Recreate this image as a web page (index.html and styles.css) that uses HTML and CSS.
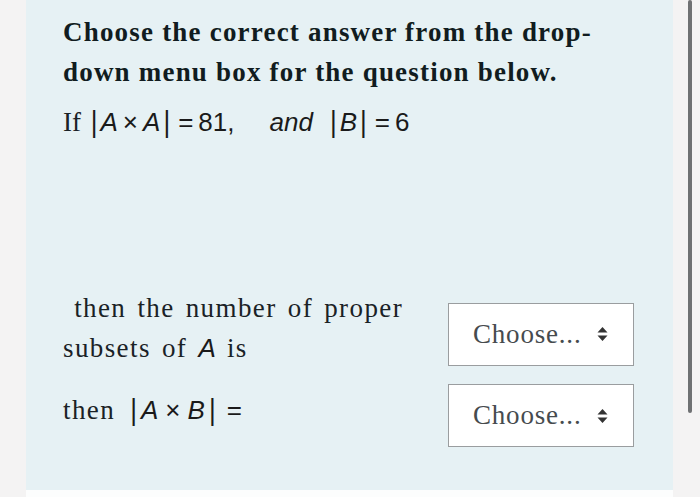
FILE: index.html
```html
<!DOCTYPE html>
<html lang="en">
<head>
<meta charset="utf-8">
<title>Question</title>
<link rel="stylesheet" href="styles.css">
</head>
<body>
<div class="page">
  <div class="main">
    <div class="panel">
      <p class="heading">Choose the correct answer from the drop-down menu box for the question below.</p>
      <p class="given">If <span class="math"><span class="bar">|</span><i>A</i><span class="op">×</span><i>A</i><span class="bar">|</span><span class="op">=</span>81,</span><span class="math and"><i>and</i></span><span class="math"><span class="bar">|</span><i>B</i><span class="bar">|</span><span class="op">=</span>6</span></p>
      <div class="rows">
        <div class="row">
          <div class="label">&nbsp;then the number of proper subsets of <span class="math"><i>A</i></span> is</div>
          <div class="select"><span class="choose">Choose...</span><svg class="caret" width="11" height="16" viewBox="0 0 11 16"><path d="M5.5 1 L10.5 6.5 H0.5 Z M5.5 15 L10.5 9.5 H0.5 Z" fill="#333"/></svg></div>
        </div>
        <div class="row">
          <div class="label">then <span class="math"><span class="bar">|</span><i>A</i><span class="op">×</span><i>B</i><span class="bar">|</span><span class="op">=</span></span></div>
          <div class="select"><span class="choose">Choose...</span><svg class="caret" width="11" height="16" viewBox="0 0 11 16"><path d="M5.5 1 L10.5 6.5 H0.5 Z M5.5 15 L10.5 9.5 H0.5 Z" fill="#333"/></svg></div>
        </div>
      </div>
    </div>
  </div>
  <div class="scroll"><div class="thumb"></div></div>
</div>
</body>
</html>
```

FILE: styles.css
```css
html, body {
  margin: 0;
  padding: 0;
}
body {
  background: #f4f3f3;
  width: 700px;
  height: 497px;
  overflow: hidden;
  font-family: "Liberation Serif", serif;
  color: #1a2226;
}
.page {
  display: flex;
  height: 497px;
}
.main {
  margin-left: 26px;
  width: 647px;
  height: 497px;
  background: #fcfdfd;
}
.panel {
  background: #e6f1f4;
  height: 490px;
  box-sizing: border-box;
  padding: 12px 36px 0 37px;
}
.heading {
  margin: 0;
  width: 560px;
  font-weight: bold;
  font-size: 27px;
  line-height: 40px;
  letter-spacing: 1.2px;
  color: #111c20;
}
.given {
  margin: 10px 0 0 0;
  font-size: 27px;
  line-height: 40px;
  white-space: nowrap;
}
.math {
  font-family: "Liberation Sans", "Roboto", sans-serif;
  font-size: 26px;
  letter-spacing: 0;
  word-spacing: 0;
  color: #1a1a1a;
}
.math i {
  font-style: italic;
}
.math .bar {
  display: inline-block;
  transform: scaleY(1.12);
  margin: 0 3px;
}
.math .op {
  margin: 0 5px;
}
.and {
  margin: 0 14px 0 35px;
}
.rows {
  margin-top: 146px;
  display: flex;
  flex-direction: column;
  gap: 4px;
}
.row {
  display: flex;
  align-items: center;
}
.label {
  width: 350px;
  margin-right: 35px;
  margin-bottom: 12px;
  font-size: 27px;
  letter-spacing: 1.4px;
  word-spacing: 3px;
  line-height: 40px;
}
.label .math .op {
  margin: 0 7px;
}
.label .math .bar {
  margin: 0 4px;
}
.select {
  width: 186px;
  height: 63px;
  box-sizing: border-box;
  background: #ffffff;
  border: 1.5px solid #9a9d9f;
  display: flex;
  align-items: center;
  padding-left: 24px;
  gap: 16px;
}
.choose {
  font-size: 27px;
  letter-spacing: 0.8px;
  color: #464b4e;
}
.caret {
  display: block;
}
.scroll {
  margin-left: 15px;
  width: 5px;
}
.thumb {
  width: 4px;
  height: 413px;
  background: #6f7173;
  border-radius: 2px;
}
```
